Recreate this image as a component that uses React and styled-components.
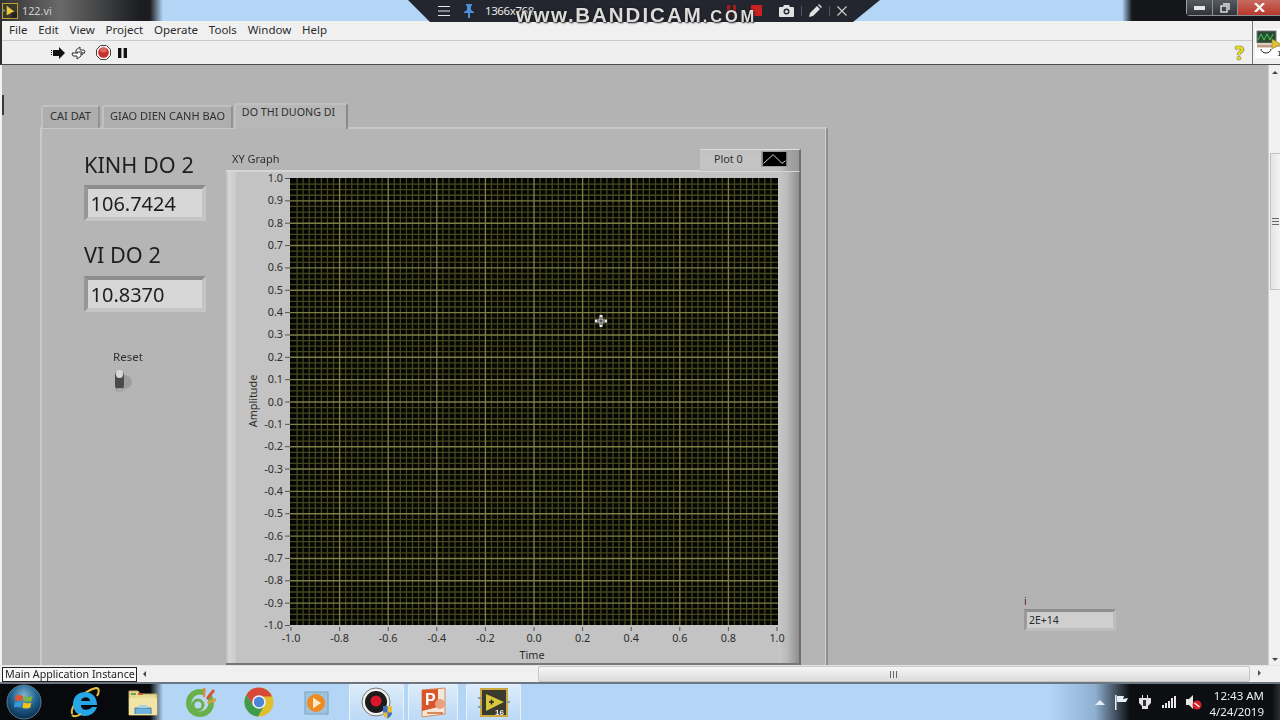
import React from "react";
import styled, { createGlobalStyle } from "styled-components";

const Global = createGlobalStyle`
  html, body { margin: 0; padding: 0; background: #b3b3b3; overflow: hidden; }
  #root { width: 1280px; height: 720px; }
  * { box-sizing: border-box; }
`;

const Page = styled.div`
  width: 1280px; height: 720px; display: flex; flex-direction: column; position: relative; overflow: hidden;
  font-family: "Noto Sans", "Liberation Sans", sans-serif; color: #1c1c1c; filter: blur(0.35px);
`;
const TitleBar = styled.div`
  height: 21px; flex: none; display: flex; align-items: center; justify-content: space-between;
  background: linear-gradient(90deg, #30302e 0, #6a6a6a 60px, #1b1d20 140px, #1b1d20 150px, #b4d6f6 163px, #b4d6f6 1122px, #14161a 1132px, #14161a 1186px);
`;
const TitleLeft = styled.div`
  display: flex; align-items: center; gap: 4px; padding-left: 2px; font-size: 10.8px; color: #cfcfcf;
`;
const WindowButtons = styled.div`
  display: flex; height: 16px; align-self: flex-start; margin-right: 0; width: 94px;
  border-left: 1px solid #9aa0a6; border-bottom: 1px solid #8b9095; border-bottom-left-radius: 4px;
`;
const WinBtn = styled.div`
  flex: ${p => p.$close ? "0 0 42px" : "1"}; display: flex; align-items: center; justify-content: center;
  background: ${p => p.$close ? "linear-gradient(#c86a5e,#b8392b)" : "linear-gradient(#565b62,#30343a)"};
  border-right: ${p => p.$close ? "none" : "1px solid #8b9095"};
`;
const Bandi = styled.div`
  position: absolute; left: 408px; top: 0; width: 472px; height: 22px; background: #23262e;
  clip-path: polygon(0 0, 100% 0, 445px 100%, 22px 100%);
  color: #f0f0f0; font-size: 11.5px;
`;
const BandiRow = styled.div`
  display: flex; align-items: center; height: 21px; padding-left: 30px; gap: 0;
`;
const BandiSize = styled.span`
  margin-left: 11px; letter-spacing: -0.4px; color: #e8e8e8;
`;
const BandiRight = styled.div`
  margin-left: auto; display: flex; align-items: center; gap: 7px; padding-right: 33px;
`;
const BandiGap = styled.span`
  width: ${p => p.$w}px;
`;
const BandiSep = styled.i`
  width: 1px; height: 10px; background: #555;
`;
const Watermark = styled.div`
  position: absolute; left: 516px; top: 3px; font-family: "Liberation Sans", sans-serif; font-weight: 700;
  font-size: 20.5px; color: #dcdcdc; line-height: 24px; white-space: nowrap; letter-spacing: 2px;
  text-shadow: 0 0 2px #111, 1px 1px 2px #222, -1px 0 1px #333;
`;
const WaterWww = styled.span`
  letter-spacing: 1.6px;
`;
const WaterSmall = styled.span`
  font-size: 16.5px; letter-spacing: 2.8px;
`;
const Head = styled.div`
  height: 44px; flex: none; display: flex; border-bottom: 1px solid #4d4d4d; background: #f0f0f0; border-left: 2px solid #2c2c2c;
`;
const HeadMain = styled.div`
  flex: 1; display: flex; flex-direction: column;
`;
const MenuBar = styled.div`
  height: 20px; display: flex; align-items: center; padding: 0 0 3px 7px; gap: 10.8px; font-size: 11.5px; color: #2c2c2c;
  border-bottom: 1px solid #c9c9c9;
`;
const ToolBar = styled.div`
  flex: 1; display: flex; align-items: center; padding: 0 8px 0 49px; gap: 5px; background: #efefef;
`;
const ToolGap = styled.span`
  width: ${p => p.$w}px;
`;
const PauseSlot = styled.span`
  display: flex; margin-left: 2px;
`;
const HelpMark = styled.span`
  margin-left: auto; font-size: 19px; font-weight: 800; line-height: 18px; color: #e6dc1e;
  text-shadow: 0 0 1px #333, 0 0 1px #333;
`;
const Conn = styled.div`
  width: 28px; flex: none; border-left: 1px solid #777; background: #f0f0f0; display: flex; align-items: center; padding-left: 2px;
`;
const ConnBox = styled.div`
  width: 26px; height: 29px; background: #fff; position: relative; font-size: 9px; margin-top: 1px;
`;
const Middle = styled.div`
  flex: none; height: 600px; display: flex;
`;
const Canvas = styled.div`
  flex: 1; position: relative; overflow: hidden; background: #b3b3b3; border-left: 2px solid #f2f2f2;
`;
const Mark = styled.i`
  position: absolute; left: 0; top: 30px; width: 2px; height: 20px; background: #3a3a3a;
`;
const VScroll = styled.div`
  width: 12px; flex: none; background: #f0f0f0; display: flex; flex-direction: column; align-items: center;
  justify-content: space-between; padding: 6px 0 4px; position: relative; border-left: 1px solid #cfcfcf;
`;
const VThumb = styled.div`
  position: absolute; left: 1px; right: 0; top: 88px; height: 137px; background: linear-gradient(90deg,#e4e4e4,#f4f4f4);
  border: 1px solid #c4c4c4; border-right: none; display: flex; align-items: center; justify-content: center;
`;
const GripV = styled.div`
  width: 7px; height: 8px; background: repeating-linear-gradient(#6a6a6a 0 1px, #e8e8e8 1px 3px);
`;
const Arrow = styled.i`
  width: 0; height: 0; display: block; border: 3.5px solid transparent;
  ${p => p.$dir === "up" && "border-bottom-color:#444; border-top-width:0;"}
  ${p => p.$dir === "down" && "border-top-color:#444; border-bottom-width:0;"}
  ${p => p.$dir === "left" && "border-right-color:#444; border-left-width:0;"}
  ${p => p.$dir === "right" && "border-left-color:#555; border-right-width:0;"}
`;
const TrayArrow = styled.i`
  width: 0; height: 0; display: block; border: 5px solid transparent; border-top-width: 0; border-bottom-color: #e4eef8; border-bottom-width: 5px;
`;
const HScroll = styled.div`
  height: 19px; flex: none; display: flex; align-items: center; background: #f0f0f0; position: relative;
  border-top: 1px solid #e3e3e3; border-bottom: 2px solid #6d7680; padding-left: 2px;
`;
const InstanceBox = styled.div`
  width: 135px; height: 15px; border: 1px solid #222; background: #f7f7f7; font-size: 10.7px; line-height: 13px;
  padding-left: 2px; white-space: nowrap; color: #222; overflow: hidden;
`;
const HArrowLeft = styled.div`
  margin-left: 6px;
`;
const HThumb = styled.div`
  position: absolute; left: 538px; width: 712px; top: 0; height: 16px; background: linear-gradient(#f6f6f6,#dcdcdc);
  border: 1px solid #c8c8c8; border-radius: 2px; display: flex; align-items: center; justify-content: center;
`;
const GripH = styled.div`
  width: 8px; height: 7px; background: repeating-linear-gradient(90deg,#666 0 1px,#e8e8e8 1px 3px);
`;
const HArrowRight = styled.div`
  position: absolute; left: 1258px; top: 4px;
`;
const Taskbar = styled.div`
  flex: none; height: 36px; position: relative; display: flex; align-items: center;
  background: linear-gradient(90deg,#07090d 0,#07090d 150px,#b3d5f6 163px,#b3d5f6 1050px,#8fb0d0 1095px,#0c0e12 1130px,#0c0e12 1272px,#2c2f33 1280px);
`;
const Slot = styled.div`
  flex: none; width: ${p => p.$w}px; margin-left: ${p => p.$ml || 0}px; height: 36px; display: flex; align-items: center; justify-content: center;
  ${p => p.$active && "background: linear-gradient(#dcecfb,#bcd9f6); border: 1px solid #e8f2fb; border-bottom: none; border-radius: 2px 2px 0 0;"}
`;
const Tray = styled.div`
  position: absolute; left: 1095px; top: 0; bottom: 0; display: flex; align-items: center; gap: 10px;
`;
const Clock = styled.div`
  position: absolute; left: 1200px; width: 64px; top: 4px; text-align: right; font-size: 11.5px; line-height: 16px; color: #eee;
`;

const TabPanel = styled.div`
  position: absolute; left: 38px; top: 62px; width: 788px; height: 560px; background: #b5b5b5;
  border: 2px solid #c8c8c8; border-right: 2px solid #8e8e8e; border-left: 2px solid #c9c9c9; box-shadow: inset -1px 0 0 #d0d0d0;
`;
const Tab = styled.div`
  position: absolute; left: ${p => p.$x}px; top: ${p => p.$y}px; width: ${p => p.$w}px; height: ${p => p.$h}px;
  background: ${p => p.$active ? "#b7b7b7" : "#aeaeae"}; color: #303030; font-size: ${p => p.$active ? 10.7 : 11}px; text-align: center;
  padding-right: ${p => p.$active ? 5 : 0}px;
  line-height: ${p => p.$active ? "15px" : "18px"}; white-space: nowrap; border-radius: 3px 3px 0 0; z-index: ${p => p.$active ? 2 : 0};
  border-top: 2px solid #c0c0c0; border-left: 2px solid #c0c0c0; border-right: 2px solid ${p => p.$active ? "#8a8a8a" : "#939393"};
`;
const BigLabel = styled.div`
  position: absolute; left: 82px; top: ${p => p.$y}px; font-size: 21.7px; line-height: 28px; color: #1e1e1e; white-space: nowrap;
`;
const Numeric = styled.div`
  position: absolute; left: 82px; top: ${p => p.$y}px; width: 122px; height: 36px; background: #d7d7d7;
  border: 4px solid #c2c2c2; border-top-color: #8d8d8d; border-left-color: #979797; border-right-color: #c5c5c5; border-bottom-color: #c5c5c5;
  font-size: 20px; line-height: 30px; padding-left: 2.5px; color: #1e1e1e;
`;
const SmallLabel = styled.div`
  position: absolute; left: ${p => p.$x}px; top: ${p => p.$y}px; font-size: ${p => p.$size || 11}px; line-height: 14px; color: ${p => p.$color || "#303030"}; white-space: nowrap;
`;
const Toggle = styled.svg`
  position: absolute; left: 109px; top: 304px;
`;
const GraphFrame = styled.div`
  position: absolute; left: 224px; top: 105px; width: 575px; height: 495px; background: #c3c3c3;
  border-top: 2px solid #d6d6d6; border-right: 2px solid #6d6d6d; border-bottom: 2px solid #777;
`;
const GraphEdge = styled.div`
  position: absolute; left: 0; top: 0; bottom: 0; width: 10px; background: linear-gradient(90deg,#bdbdbd,#d5d5d5 30%,#cbcbcb);
`;
const GraphRightEdge = styled.div`
  position: absolute; right: 0; top: 0; bottom: 0; width: 21px; background: linear-gradient(90deg,#c8c8c8,#b9b9b9 45%,#8e8e8e);
`;
const Plot = styled.svg`
  position: absolute; left: 0; top: -2px; display: block;
`;
const PlotLegend = styled.div`
  position: absolute; left: 698px; top: 84px; width: 101px; height: 22px; display: flex; align-items: center;
  padding: 0 0 4px 14px; background: #c4c4c4; font-size: 10.8px; color: #303030; border-top: 1px solid #dcdcdc;
  border-right: 2px solid #6d6d6d; box-shadow: inset -21px 0 12px -8px #9a9a9a;
`;
const Swatch = styled.svg`
  margin-left: 18px; display: block; border: 1px solid #9c9c9c;
`;
const Indicator = styled.div`
  position: absolute; left: 1022px; top: 544px; width: 92px; height: 22px; background: #cfcfcf;
  border: 3px solid #bdbdbd; border-top-color: #8f8f8f; border-left-color: #9a9a9a; font-size: 10.5px; line-height: 16px; padding-left: 2px; color: #2a2a2a;
`;
const Cursor = styled.svg`
  position: absolute; left: 592px; top: 249px;
`;

const minorX = Array.from({ length: 81 }, (_, i) => 291 + i * (486 / 80));
const minorY = Array.from({ length: 81 }, (_, i) => 178.5 + i * (447 / 80));
const yLabels = Array.from({ length: 21 }, (_, i) => (1 - i * 0.1).toFixed(1).replace("-0.0", "0.0"));
const xLabels = Array.from({ length: 11 }, (_, i) => (-1 + i * 0.2).toFixed(1).replace("-0.0", "0.0"));
const isInner = i => i > 0 && i < 80;

function GraphPlot() {
  return (
    <Plot width="575" height="497" viewBox="226 170 575 497">
      <rect x="290" y="178" width="488" height="447" fill="#050503" />
      {minorX.map((x, i) => isInner(i) && i % 8 !== 0 && <line key={i} x1={x} x2={x} y1="178" y2="625" stroke="#45481f" strokeWidth="1.3" />)}
      {minorY.map((y, i) => isInner(i) && i % 4 !== 0 && <line key={i} x1="290" x2="778" y1={y} y2={y} stroke="#45481f" strokeWidth="1.3" />)}
      {minorX.map((x, i) => isInner(i) && i % 8 === 0 && <line key={i} x1={x} x2={x} y1="178" y2="625" stroke="#7b7f42" strokeWidth="1.4" />)}
      {minorY.map((y, i) => isInner(i) && i % 4 === 0 && <line key={i} x1="290" x2="778" y1={y} y2={y} stroke="#7b7f42" strokeWidth="1.4" />)}
      {yLabels.map((t, i) => {
        const y = 178.5 + i * 22.35;
        return (
          <g key={t + i}>
            <line x1="285" x2="290" y1={y} y2={y} stroke="#555" />
            <text x="283" y={y + 3.5} textAnchor="end" fontSize="10.8" fill="#2c2c2c" fontFamily="Noto Sans">{t}</text>
          </g>
        );
      })}
      {xLabels.map((t, i) => {
        const x = 291 + i * 48.6;
        return (
          <g key={t + i}>
            <line x1={x} x2={x} y1="627" y2="631" stroke="#555" />
            <text x={x} y="642" textAnchor="middle" fontSize="10.8" fill="#2c2c2c" fontFamily="Noto Sans">{t}</text>
          </g>
        );
      })}
      <text x="532" y="659" textAnchor="middle" fontSize="10.8" fill="#2c2c2c" fontFamily="Noto Sans">Time</text>
      <text transform="translate(257,401) rotate(-90)" textAnchor="middle" fontSize="10.8" fill="#2c2c2c" fontFamily="Noto Sans">Amplitude</text>
    </Plot>
  );
}

const ViIcon = () => (
  <svg width="16" height="16" viewBox="0 0 17 17">
    <rect x="0.5" y="0.5" width="16" height="16" fill="#3a3a2c" stroke="#c9a33a" />
    <path d="M5 3 L13 9 L5 13Z" fill="#e8c83a" />
    <rect x="10" y="10" width="6" height="6" fill="#222" />
    <rect x="0" y="7" width="3" height="2" fill="#7fa08a" />
  </svg>
);
const RunIcon = () => (
  <svg width="15" height="12" viewBox="0 0 15 12"><path d="M0 3h1v1H0zM0 5h1v1H0zM0 7h1v1H0zM2 3h6V0l6 6-6 6V9H2z" fill="#111" /></svg>
);
const RunContIcon = () => (
  <svg width="15" height="14" viewBox="0 0 15 14" fill="none" stroke="#333" strokeWidth="1">
    <path d="M1 7 H5 V4 L9 1 V4 H13 L14 6 L11 9 V6 H6 V8 L3 10Z" fill="#fff" />
    <path d="M14 7 H10 V10 L6 13 V10 H2 L1 8" fill="#fff" />
  </svg>
);
const AbortIcon = () => (
  <svg width="15" height="15" viewBox="0 0 15 15">
    <path d="M4.5.5h6l4 4v6l-4 4h-6l-4-4v-6z" fill="#fbeaea" stroke="#444" />
    <circle cx="7.5" cy="7.5" r="5.3" fill="#c8312e" />
    <ellipse cx="7.5" cy="5.3" rx="3.4" ry="2.2" fill="#dc6a63" />
  </svg>
);
const PauseIcon = () => (
  <svg width="9" height="10" viewBox="0 0 9 10"><rect width="3.4" height="10" fill="#111" /><rect x="5.6" width="3.4" height="10" fill="#111" /></svg>
);
const ConnIcon = () => (
  <svg width="26" height="29" viewBox="0 0 26 29">
    <rect x="2" y="2" width="19" height="12" fill="#2c4a32" stroke="#777" />
    <path d="M3 11 L6 5 L9 11 L12 5 L15 11 L18 5" stroke="#3fd05a" fill="none" />
    <rect x="2" y="14" width="19" height="5" fill="#d8d3c0" />
    <path d="M6 20 a5 4 0 0 0 10 0" stroke="#222" fill="none" />
    <path d="M2 17 H26" stroke="#b85a4c" />
    <path d="M17 10 L26 15 L17 20Z" fill="#d9c13a" stroke="#8a7a1c" strokeWidth="0.5" />
    <text x="22" y="27" fontSize="8" fill="#222" fontFamily="Liberation Sans">1</text>
  </svg>
);

const Orb = () => (
  <svg width="36" height="36" viewBox="0 0 36 36">
    <defs>
      <radialGradient id="orb" cx="50%" cy="30%" r="70%"><stop offset="0" stopColor="#7fb4cf" /><stop offset="0.55" stopColor="#1f5f8c" /><stop offset="1" stopColor="#0b2c4a" /></radialGradient>
    </defs>
    <circle cx="18" cy="18" r="17" fill="url(#orb)" stroke="#5a7f95" />
    <path d="M9.5 12 C12 10.5 14 11 17 12 L16 17 C13.5 16 12 16 9 17Z" fill="#e2542c" />
    <path d="M18.5 12.3 C21 13.4 24 13.4 26.5 12 L25.5 17 C23 18.2 20.5 18 17.5 17Z" fill="#7db53a" />
    <path d="M8.8 18.2 C12 17.2 13.5 17.2 15.8 18.2 L14.8 23.6 C12.5 22.6 10.5 22.6 8 23.6Z" fill="#3a9ad9" />
    <path d="M17.2 18.6 C20 19.6 22.5 19.6 25.3 18.4 L24.3 23.6 C22 24.8 19 24.6 16.3 23.8Z" fill="#f2c21a" />
  </svg>
);
const IE = () => (
  <svg width="32" height="32" viewBox="0 0 32 32">
    <path d="M3 28 C1 20 14 5 27 2 C31 2 30 7 28 10" fill="none" stroke="#e8c23a" strokeWidth="2" />
    <path d="M4 18 C4 10 10 6 16 6 C23 6 28 11 28 19 H12 C12 25 20 25 23 21 H28 C26 27 21 30 16 30 C9 30 4 25 4 18Z M12 15 H21 C21 10 13 10 12 15Z" fill="#27a6e6" fillRule="evenodd" />
    <path d="M3 29 C5 31 9 30 12 28" fill="none" stroke="#e8c23a" strokeWidth="2" />
  </svg>
);
const Folder = () => (
  <svg width="32" height="30" viewBox="0 0 32 30">
    <path d="M2 4 H11 L13 7 H30 V28 H2Z" fill="#e9d88f" stroke="#b7a664" />
    <rect x="4" y="6" width="5" height="2" fill="#6d9e52" />
    <rect x="11" y="6" width="5" height="2" fill="#c0563c" />
    <rect x="2" y="11" width="28" height="17" fill="#f2e4a6" />
    <path d="M8 27 V21 H24 V27" fill="#6fb3dc" stroke="#3f7fa8" />
    <rect x="12" y="18" width="8" height="3" fill="#a6d2ec" />
  </svg>
);
const CocCoc = () => (
  <svg width="32" height="32" viewBox="0 0 32 32">
    <circle cx="15" cy="17" r="14" fill="#69b04a" />
    <circle cx="15" cy="17" r="8.5" fill="#b9d8f5" />
    <circle cx="13" cy="19" r="5" fill="none" stroke="#69b04a" strokeWidth="3" />
    <path d="M18 10 L23 0 L29 0 L21 13Z" fill="#b3d5f6" />
    <path d="M18 11 L18 2 L20.5 2 L20 11Z" fill="#e8843a" />
    <path d="M21 12 L28 3 L30 5 L23 14Z" fill="#d9542c" />
    <path d="M22 16 L31 12 L31 15 L23 18Z" fill="#d9a03a" />
  </svg>
);
const Chrome = () => (
  <svg width="30" height="30" viewBox="0 0 30 30">
    <circle cx="15" cy="15" r="14.5" fill="#e0bf2e" />
    <path d="M15 .5 A14.5 14.5 0 0 0 2.4 7.7 L8.6 18.6 L15 9.5 H27.9 A14.5 14.5 0 0 0 15 .5Z" fill="#d8483a" />
    <path d="M2.4 7.7 A14.5 14.5 0 0 0 14 29.5 L20.4 18.5 L9 18.6Z" fill="#3e9c50" />
    <circle cx="15" cy="15" r="6.8" fill="#f3f3f3" />
    <circle cx="15" cy="15" r="5.2" fill="#4b87d8" />
  </svg>
);
const Wmp = () => (
  <svg width="28" height="28" viewBox="0 0 28 28">
    <rect x="2" y="4" width="23" height="22" fill="#9fc3de" stroke="#7ba3c2" />
    <circle cx="13" cy="15" r="9" fill="#ef8a1f" />
    <path d="M10 9.5 L18 15 L10 20.5Z" fill="#fbe9cf" />
  </svg>
);
const BandiIcon = () => (
  <svg width="32" height="32" viewBox="0 0 32 32">
    <circle cx="15" cy="15" r="14" fill="#f1f1f1" stroke="#777" />
    <circle cx="15" cy="15" r="11" fill="#1b1b1b" />
    <circle cx="15" cy="14" r="5.5" fill="#d8172a" />
    <path d="M22 19 L31 19 L31 26 C31 29 27 31 26.5 32 C26 31 22 29 22 26Z" fill="#3a6fc4" />
    <path d="M26.5 19 H31 V25.5 H26.5Z M22 25.5 H26.5 V32 C26 31 22 29 22 26Z" fill="#e8c23a" />
  </svg>
);
const Ppt = () => (
  <svg width="30" height="32" viewBox="0 0 30 32">
    <path d="M4 3 L27 1 V27 L4 30Z" fill="#f3e6da" stroke="#d98a5a" />
    <path d="M4 3 L20 2 V20 L4 24Z" fill="#d9562a" />
    <text x="7" y="18" fontSize="16" fontWeight="700" fill="#fff" fontFamily="Liberation Sans">P</text>
    <circle cx="22" cy="17" r="5" fill="#e9a17e" />
    <rect x="9" y="25" width="16" height="2" fill="#d98a5a" />
  </svg>
);
const LvIcon = () => (
  <svg width="32" height="30" viewBox="0 0 32 30">
    <rect x="3" y="1" width="26" height="27" fill="#3a3a2e" stroke="#cda63c" strokeWidth="2" />
    <path d="M8 6 L26 14 L8 23Z" fill="#d8c63c" />
    <path d="M11 14h5M13.5 11.5v5" stroke="#222" strokeWidth="1.4" />
    <path d="M0 10h4M0 19h4M28 14h4" stroke="#8fa093" strokeWidth="2" />
    <text x="17" y="27" fontSize="8" fontWeight="700" fill="#eee" fontFamily="Liberation Sans">16</text>
  </svg>
);

export default function App() {
  return (
    <Page>
      <Global />
      <TitleBar>
        <TitleLeft><ViIcon /><span>122.vi</span></TitleLeft>
        <WindowButtons>
          <WinBtn><svg width="11" height="4"><rect width="11" height="4" fill="#e6e6e6" /></svg></WinBtn>
          <WinBtn><svg width="10" height="10" fill="none" stroke="#e6e6e6" strokeWidth="1.4"><rect x="1" y="3" width="6" height="6" /><path d="M3 1h6v6" /></svg></WinBtn>
          <WinBtn $close><svg width="11" height="9" stroke="#f4f4f4" strokeWidth="2.4"><path d="M1 0l9 9M10 0L1 9" /></svg></WinBtn>
        </WindowButtons>
      </TitleBar>

      <Bandi>
        <BandiRow>
          <svg width="12" height="12" stroke="#e6e6e6" strokeWidth="1"><path d="M0 1.5h12M0 6h12M0 10.5h12" /></svg>
          <BandiGap $w={14} />
          <svg width="10" height="14" viewBox="0 0 10 14" fill="#4a90dc"><path d="M2 0h6v1.5L7 2v4l3 2v1H6v5H4V9H0V8l3-2V2L2 1.5z" /></svg>
          <BandiSize>1366x768</BandiSize>
          <BandiRight>
            <svg width="10" height="11" fill="#a51d1d"><rect width="3" height="11" /><rect x="6" width="3" height="11" /></svg>
            <BandiGap $w={0} />
            <svg width="11" height="11"><rect width="11" height="11" fill="#c92020" /></svg>
            <BandiGap $w={3} />
            <svg width="15" height="12" viewBox="0 0 15 12"><path d="M1 2h3l1-2h5l1 2h3a1 1 0 0 1 1 1v8a1 1 0 0 1-1 1H1a1 1 0 0 1-1-1V3a1 1 0 0 1 1-1z" fill="#e2e2e2" /><circle cx="7.5" cy="6.5" r="3" fill="#23262e" /><circle cx="7.5" cy="6.5" r="1.6" fill="#e2e2e2" /></svg>
            <BandiSep />
            <svg width="13" height="13" viewBox="0 0 13 13"><path d="M0 13l1-4 7-7 3 3-7 7zM9 1l1-1 3 3-1 1z" fill="#e2e2e2" /></svg>
            <BandiSep />
            <svg width="10" height="10" stroke="#d0d0d0" strokeWidth="1.1"><path d="M0.5 0.5l9 9M9.5 0.5l-9 9" /></svg>
          </BandiRight>
        </BandiRow>
      </Bandi>
      <Watermark><WaterWww>www.</WaterWww>BANDICAM<WaterSmall>.COM</WaterSmall></Watermark>

      <Head>
        <HeadMain>
          <MenuBar>
            <span>File</span><span>Edit</span><span>View</span><span>Project</span><span>Operate</span><span>Tools</span><span>Window</span><span>Help</span>
          </MenuBar>
          <ToolBar>
            <RunIcon /><RunContIcon /><ToolGap $w={0} /><AbortIcon /><PauseSlot><PauseIcon /></PauseSlot>
            <HelpMark>?</HelpMark>
          </ToolBar>
        </HeadMain>
        <Conn><ConnBox><ConnIcon /></ConnBox></Conn>
      </Head>

      <Middle>
        <Canvas>
          <Mark />
          <TabPanel />
          <Tab $x={39} $y={40} $w={59} $h={23}>CAI DAT</Tab>
          <Tab $x={100} $y={40} $w={131} $h={23}>GIAO DIEN CANH BAO</Tab>
          <Tab $active $x={232} $y={38} $w={114} $h={26}>DO THI DUONG DI</Tab>

          <BigLabel $y={86}>KINH DO 2</BigLabel>
          <Numeric $y={120}>106.7424</Numeric>
          <BigLabel $y={176}>VI DO 2</BigLabel>
          <Numeric $y={211}>10.8370</Numeric>
          <SmallLabel $x={111} $y={285} $size={11.5}>Reset</SmallLabel>
          <Toggle width="24" height="24" viewBox="0 0 24 24">
            <ellipse cx="13" cy="13" rx="8" ry="7" fill="#9d9d9d" />
            <rect x="4" y="2" width="9" height="19" rx="4.5" fill="#4a4a4a" />
            <rect x="5" y="1" width="7" height="8" rx="3.5" fill="#d8d8d8" />
            <ellipse cx="9" cy="21" rx="5" ry="2" fill="#a8a8a8" />
          </Toggle>

          <SmallLabel $x={230} $y={87}>XY Graph</SmallLabel>
          <GraphFrame>
            <GraphEdge />
            <GraphRightEdge />
            <GraphPlot />
          </GraphFrame>
          <PlotLegend>
            Plot 0
            <Swatch width="27" height="16" viewBox="0 0 27 16">
              <rect width="27" height="16" fill="#000" />
              <path d="M1 13 L12 3 L22 13 L26 10" stroke="#f2f2f2" fill="none" />
            </Swatch>
          </PlotLegend>
          <Cursor width="20" height="14" viewBox="0 0 20 14">
            <path d="M7 1v12M1 7h12" stroke="#eaeaea" strokeWidth="3" />
            <path d="M7 3v8M3 7h8" stroke="#222" strokeWidth="1" />
          </Cursor>

          <SmallLabel $x={1022} $y={529} $color="#5a2020" $size={10.5}>i</SmallLabel>
          <Indicator>2E+14</Indicator>
        </Canvas>
        <VScroll>
          <Arrow $dir="up" />
          <VThumb><GripV /></VThumb>
          <Arrow $dir="down" />
        </VScroll>
      </Middle>

      <HScroll>
        <InstanceBox>Main Application Instance</InstanceBox>
        <HArrowLeft><Arrow $dir="left" /></HArrowLeft>
        <HThumb><GripH /></HThumb>
        <HArrowRight><Arrow $dir="right" /></HArrowRight>
      </HScroll>

      <Taskbar>
        <Slot $w={46} $ml={1}><Orb /></Slot>
        <Slot $w={58} $ml={9}><IE /></Slot>
        <Slot $w={58}><Folder /></Slot>
        <Slot $w={58}><CocCoc /></Slot>
        <Slot $w={58}><Chrome /></Slot>
        <Slot $w={58}><Wmp /></Slot>
        <Slot $w={55} $ml={3} $active><BandiIcon /></Slot>
        <Slot $w={50} $ml={4} $active><Ppt /></Slot>
        <Slot $w={55} $ml={8} $active><LvIcon /></Slot>
        <Tray>
          <TrayArrow />
          <svg width="14" height="15" viewBox="0 0 14 15" fill="#e8eef5"><rect width="1.5" height="15" /><path d="M2 1h7l-1 3 5-1-2 4H2z" /></svg>
          <svg width="13" height="14" viewBox="0 0 13 14" fill="#e2e2e2"><path d="M3 0h1v3h4V0h1v3h3v5l-3 3v3H3v-3L0 8V3h3z" /><rect x="4" y="5" width="3" height="6" fill="#333" /></svg>
          <svg width="14" height="12" viewBox="0 0 14 12" fill="#e8e8e8"><rect x="0" y="9" width="2" height="3" /><rect x="3" y="7" width="2" height="5" /><rect x="6" y="5" width="2" height="7" /><rect x="9" y="2" width="2" height="10" /><rect x="12" y="0" width="2" height="12" /></svg>
          <svg width="16" height="15" viewBox="0 0 16 15"><path d="M0 4h3l4-4v14l-4-4H0z" fill="#e6e6e6" /><circle cx="11" cy="10" r="4.5" fill="#d5202a" /><path d="M8.5 8l5 4" stroke="#fff" strokeWidth="1.3" /></svg>
        </Tray>
        <Clock>12:43 AM<br />4/24/2019</Clock>
      </Taskbar>
    </Page>
  );
}
